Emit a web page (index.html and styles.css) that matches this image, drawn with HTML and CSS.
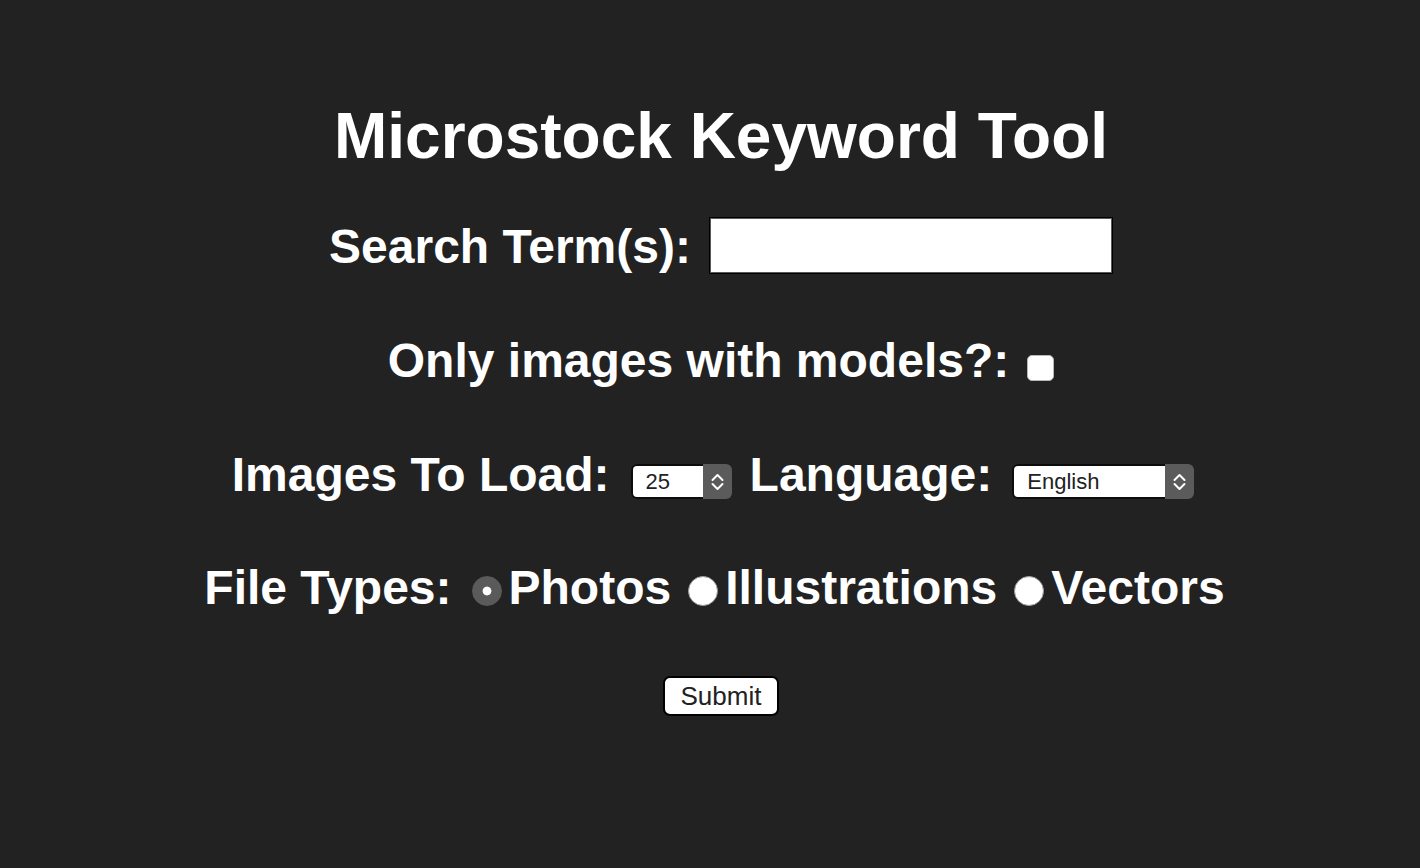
FILE: index.html
```html
<!DOCTYPE html>
<html lang="en">
<head>
<meta charset="utf-8">
<title>Microstock Keyword Tool</title>
<link rel="stylesheet" href="styles.css">
</head>
<body>
<main class="page">
  <h1 class="title">Microstock Keyword Tool</h1>
  <form class="form">
    <div class="row row-search">
      <label class="label" for="q">Search Term(s):</label>
      <input id="q" class="text-input" type="text">
    </div>
    <div class="row row-models">
      <label class="label" for="models">Only images with models?:</label>
      <input id="models" class="check" type="checkbox">
    </div>
    <div class="row row-load">
      <label class="label" for="count">Images To Load:</label>
      <div class="select select-count">
        <select id="count"><option>25</option><option>50</option><option>100</option></select>
        <span class="select-arrow"><svg width="29" height="35" viewBox="0 0 29 35"><polyline points="9.5,16 14.5,11 19.5,16" fill="none" stroke="#fff" stroke-width="2" stroke-linecap="round" stroke-linejoin="round"/><polyline points="9.5,20 14.5,25 19.5,20" fill="none" stroke="#fff" stroke-width="2" stroke-linecap="round" stroke-linejoin="round"/></svg></span>
      </div>
      <label class="label label-lang" for="lang">Language:</label>
      <div class="select select-lang">
        <select id="lang"><option>English</option><option>Deutsch</option><option>Español</option></select>
        <span class="select-arrow"><svg width="29" height="35" viewBox="0 0 29 35"><polyline points="9.5,16 14.5,11 19.5,16" fill="none" stroke="#fff" stroke-width="2" stroke-linecap="round" stroke-linejoin="round"/><polyline points="9.5,20 14.5,25 19.5,20" fill="none" stroke="#fff" stroke-width="2" stroke-linecap="round" stroke-linejoin="round"/></svg></span>
      </div>
    </div>
    <div class="row row-types">
      <span class="label">File Types:</span>
      <input class="radio radio-first" type="radio" name="type" id="t-photos" checked>
      <label class="label" for="t-photos">Photos</label>
      <input class="radio" type="radio" name="type" id="t-illus">
      <label class="label" for="t-illus">Illustrations</label>
      <input class="radio" type="radio" name="type" id="t-vec">
      <label class="label" for="t-vec">Vectors</label>
    </div>
    <div class="row row-submit">
      <button class="submit" type="button">Submit</button>
    </div>
  </form>
</main>
</body>
</html>
```

FILE: styles.css
```css
html, body {
  margin: 0;
  background: #222222;
}

body {
  font-family: "Liberation Sans", Arial, Helvetica, sans-serif;
  color: #ffffff;
}

.page {
  padding: 100px 0 0 22px;
  display: flex;
  flex-direction: column;
  align-items: center;
}

.title {
  margin: 0;
  font-size: 64px;
  line-height: 72px;
  font-weight: bold;
}

.form {
  display: flex;
  flex-direction: column;
  align-items: center;
  margin-top: 45px;
}

.row {
  display: flex;
  align-items: center;
}

.label {
  font-size: 48px;
  line-height: 52px;
  padding-top: 4px;
  font-weight: bold;
  white-space: nowrap;
}

/* search */
.row-search {
  gap: 18px;
}

.row-search .label {
  padding-top: 2px;
  line-height: 54px;
}

.text-input {
  box-sizing: border-box;
  width: 404px;
  height: 57px;
  margin: 0;
  border: 1px solid #000;
  box-shadow: inset 0 0 0 1px #5a5a5a;
  background: #ffffff;
  font-size: 24px;
  padding: 0 8px;
  outline: none;
}

/* checkbox */
.row-models {
  margin-top: 57px;
  gap: 18px;
}

.check {
  appearance: none;
  -webkit-appearance: none;
  box-sizing: border-box;
  width: 27px;
  height: 26px;
  margin: 17px 0 0 0;
  background: #ffffff;
  border: 1px solid #b8b8b8;
  border-radius: 5px;
}

/* selects */
.row-load {
  margin-top: 58px;
  padding-right: 16px;
}

.select {
  display: flex;
  height: 35px;
  box-sizing: border-box;
  margin-top: 17px;
  border-radius: 6px;
  overflow: hidden;
}

.select-count {
  width: 101px;
  margin-left: 21px;
}

.select-lang {
  width: 182px;
  margin-left: 20px;
}

.label-lang {
  margin-left: 18px;
}

.select select {
  appearance: none;
  -webkit-appearance: none;
  flex: 1;
  min-width: 0;
  margin: 0;
  height: 35px;
  box-sizing: border-box;
  border: 2px solid #0c0c0c;
  border-right: none;
  border-radius: 6px 0 0 6px;
  background: #ffffff;
  color: #222222;
  font-family: "Liberation Sans", Arial, sans-serif;
  font-size: 22px;
  padding: 0 0 0 13px;
  outline: none;
}

.select-arrow {
  width: 29px;
  height: 35px;
  flex: none;
  background: #5b5b5b;
  display: flex;
}

/* radios */
.row-types {
  margin-top: 57px;
  padding-right: 13px;
}

.radio {
  appearance: none;
  -webkit-appearance: none;
  box-sizing: border-box;
  width: 30px;
  height: 30px;
  margin: 10px 7px 0 17px;
  border-radius: 50%;
  background: #ffffff;
  border: 1px solid #9a9a9a;
  flex: none;
}

.radio-first {
  margin-left: 20px;
}

.radio:checked {
  background: radial-gradient(circle, #ffffff 0, #ffffff 4px, #5a5a5a 4.8px);
  border: 1px solid #5a5a5a;
}

/* submit */
.row-submit {
  margin-top: 62px;
}

.submit {
  box-sizing: border-box;
  width: 116px;
  height: 40px;
  margin: 0;
  padding: 0;
  background: #ffffff;
  color: #222222;
  border: 2px solid #000000;
  border-radius: 7px;
  font-family: "Liberation Sans", Arial, sans-serif;
  font-size: 26px;
  line-height: 36px;
}
```
